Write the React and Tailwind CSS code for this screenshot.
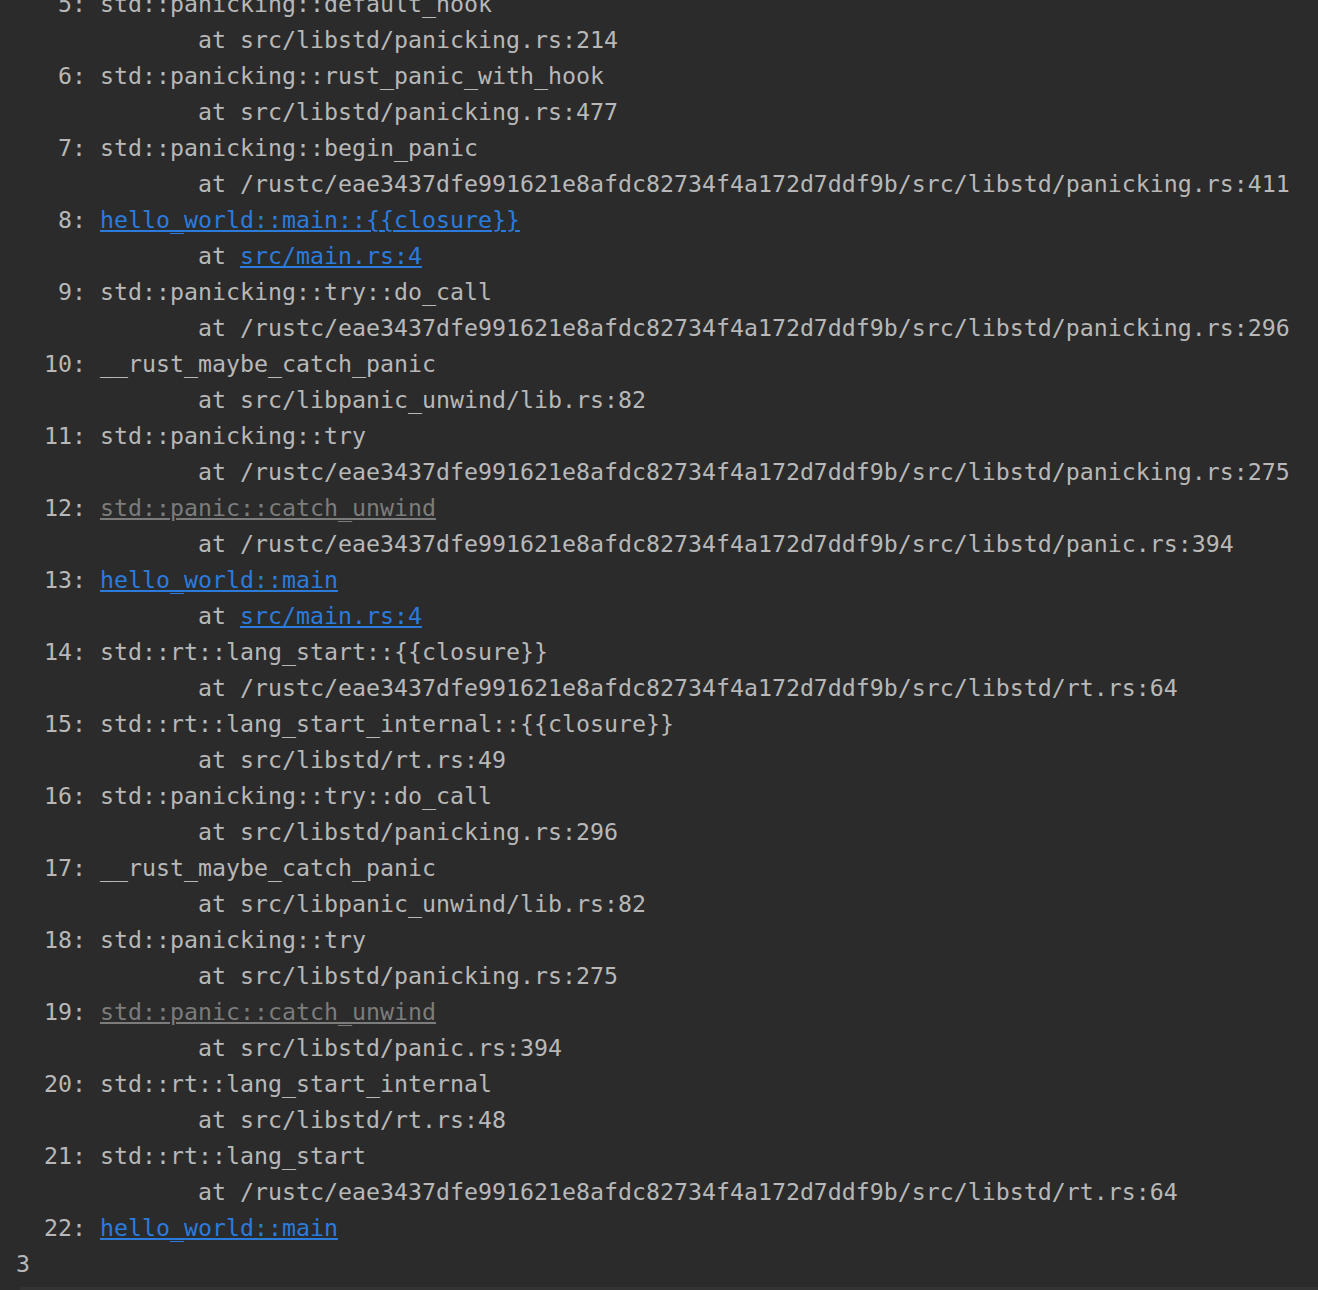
import React from 'react';

// each frame: [number, name, kind, location, locKind]
const frames = [
  ['5', 'std::panicking::default_hook', 'plain', 'src/libstd/panicking.rs:214', 'plain'],
  ['6', 'std::panicking::rust_panic_with_hook', 'plain', 'src/libstd/panicking.rs:477', 'plain'],
  ['7', 'std::panicking::begin_panic', 'plain', '/rustc/eae3437dfe991621e8afdc82734f4a172d7ddf9b/src/libstd/panicking.rs:411', 'plain'],
  ['8', 'hello_world::main::{{closure}}', 'link', 'src/main.rs:4', 'link'],
  ['9', 'std::panicking::try::do_call', 'plain', '/rustc/eae3437dfe991621e8afdc82734f4a172d7ddf9b/src/libstd/panicking.rs:296', 'plain'],
  ['10', '__rust_maybe_catch_panic', 'plain', 'src/libpanic_unwind/lib.rs:82', 'plain'],
  ['11', 'std::panicking::try', 'plain', '/rustc/eae3437dfe991621e8afdc82734f4a172d7ddf9b/src/libstd/panicking.rs:275', 'plain'],
  ['12', 'std::panic::catch_unwind', 'muted', '/rustc/eae3437dfe991621e8afdc82734f4a172d7ddf9b/src/libstd/panic.rs:394', 'plain'],
  ['13', 'hello_world::main', 'link', 'src/main.rs:4', 'link'],
  ['14', 'std::rt::lang_start::{{closure}}', 'plain', '/rustc/eae3437dfe991621e8afdc82734f4a172d7ddf9b/src/libstd/rt.rs:64', 'plain'],
  ['15', 'std::rt::lang_start_internal::{{closure}}', 'plain', 'src/libstd/rt.rs:49', 'plain'],
  ['16', 'std::panicking::try::do_call', 'plain', 'src/libstd/panicking.rs:296', 'plain'],
  ['17', '__rust_maybe_catch_panic', 'plain', 'src/libpanic_unwind/lib.rs:82', 'plain'],
  ['18', 'std::panicking::try', 'plain', 'src/libstd/panicking.rs:275', 'plain'],
  ['19', 'std::panic::catch_unwind', 'muted', 'src/libstd/panic.rs:394', 'plain'],
  ['20', 'std::rt::lang_start_internal', 'plain', 'src/libstd/rt.rs:48', 'plain'],
  ['21', 'std::rt::lang_start', 'plain', '/rustc/eae3437dfe991621e8afdc82734f4a172d7ddf9b/src/libstd/rt.rs:64', 'plain'],
  ['22', 'hello_world::main', 'link', null, null],
];

function Text({ kind, children }) {
  if (kind === 'link') {
    return (
      <span className="text-[#2b7bdc] underline decoration-[2px] underline-offset-[2px]">
        {children}
      </span>
    );
  }
  if (kind === 'muted') {
    return (
      <span className="text-[#7c7c7c] underline decoration-[2px] underline-offset-[2px]">
        {children}
      </span>
    );
  }
  return <span>{children}</span>;
}

function App() {
  return (
    <div className="h-[1290px] w-full overflow-hidden bg-[#2b2b2b] flex flex-col">
      <div
        className="flex-1 overflow-hidden pl-[2px] mt-[-14px] text-[#b8b8b8] text-[23.25px] leading-[36px] whitespace-pre"
        style={{ fontFamily: '"DejaVu Sans Mono", "Liberation Mono", monospace' }}
      >
        {frames.map(([num, name, kind, loc, locKind]) => (
          <React.Fragment key={num}>
            <div>
              {num.padStart(5, ' ') + ': '}
              <Text kind={kind}>{name}</Text>
            </div>
            {loc && (
              <div>
                {'              at '}
                <Text kind={locKind}>{loc}</Text>
              </div>
            )}
          </React.Fragment>
        ))}
        <div className="pl-[14px]">3</div>
      </div>
      <div className="h-[3px] bg-[#333333] ml-[20px]" />
    </div>
  );
}

export default App;
